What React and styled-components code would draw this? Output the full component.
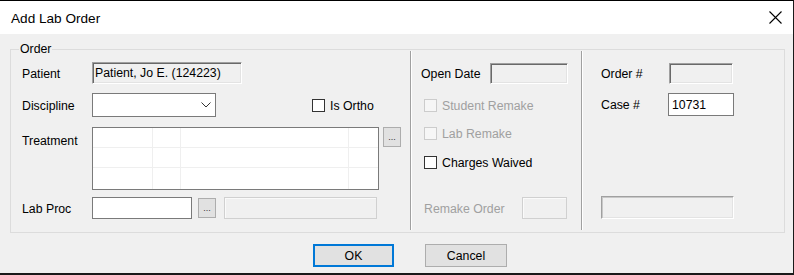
import React from "react";
import styled, { createGlobalStyle } from "styled-components";

const GlobalStyle = createGlobalStyle`
  body {
    margin: 0;
    font-family: "Liberation Sans", Arial, sans-serif;
    background: #ffffff;
  }
`

const Window = styled.div`
  width: 794px;
  height: 275px;
  box-sizing: border-box;
  border-top: 1px solid #000;
  border-right: 1px solid #1a1a1a;
  border-bottom: 2px solid #1a1a1a;
  display: flex;
  flex-direction: column;
  background: #f0f0f0;
`

const TitleBar = styled.div`
  height: 33px;
  flex: none;
  background: #fff;
  display: flex;
  align-items: center;
  justify-content: space-between;
  padding: 0 11px 0 11px;
`

const Title = styled.span`
  font-size: 13.6px;
  color: #000;
  padding-top: 1px;
`

const CloseIcon = styled.svg`
  width: 13px;
  height: 13px;
`

const Group = styled.div`
  position: relative;
  margin: 15px 8px 0 10px;
  height: 184px;
  box-sizing: border-box;
  border: 1px solid #dcdcdc;
`

const Legend = styled.span`
  position: absolute;
  top: -8px;
  left: 8px;
  padding: 0 1px;
  background: #f0f0f0;
  font-size: 12.3px;
  line-height: 14px;
`

const Columns = styled.div`
  display: grid;
  grid-template-columns: 399px 171px 1fr;
  margin-top: 1px;
  height: 179px;
`

const Column = styled.div`
  display: flex;
  flex-direction: column;
  box-sizing: border-box;
  padding-left: ${(p) => p.$pad}px;
  ${(p) => p.$divider && `
    border-left: 1px solid #a0a0a0;
    box-shadow: inset 1px 0 0 #ffffff;
  `}
`

const Row = styled.div`
  display: flex;
  align-items: ${(p) => (p.$top ? "flex-start" : "center")};
  margin-top: ${(p) => p.$mt}px;
  height: ${(p) => p.$h}px;
`

const Label = styled.span`
  font-size: 12.3px;
  line-height: 14px;
  padding-top: 1px;
  width: ${(p) => (p.$w ? `${p.$w}px` : "auto")};
  flex: none;
  color: ${(p) => (p.$disabled ? "#a0a0a0" : "#000")};
  margin-top: ${(p) => p.$mt || 0}px;
  margin-left: ${(p) => p.$ml || 0}px;
`

const TextBox = styled.div`
  box-sizing: border-box;
  width: ${(p) => p.$w}px;
  height: ${(p) => p.$h}px;
  margin-left: ${(p) => p.$ml || 0}px;
  background: #fff;
  border: 1px solid #7a7a7a;
  font-size: 12.3px;
  line-height: 14px;
  display: flex;
  align-items: center;
  padding: 1px 0 0 3px;
  flex: none;
`

const Sunken = styled.div`
  box-sizing: border-box;
  width: ${(p) => p.$w}px;
  height: ${(p) => p.$h}px;
  margin-left: ${(p) => p.$ml || 0}px;
  background: #f0f0f0;
  border: 1px solid;
  border-color: #a0a0a0 #ffffff #ffffff #a0a0a0;
  box-shadow: inset 1px 1px 0 #696969, inset -1px -1px 0 #e3e3e3;
  font-size: 12.3px;
  line-height: 14px;
  display: flex;
  align-items: center;
  padding-left: 2px;
  flex: none;
`

const FlatSunken = styled(Sunken)`
  border-color: #a0a0a0 #ffffff #ffffff #a0a0a0;
  box-shadow: inset 1px 1px 0 #c8c8c8, inset -1px -1px 0 #e3e3e3;
`

const DisabledBox = styled.div`
  box-sizing: border-box;
  width: ${(p) => p.$w}px;
  height: ${(p) => p.$h}px;
  margin-left: ${(p) => p.$ml || 0}px;
  background: #f0f0f0;
  border: 1px solid #d0d0d0;
  box-shadow: inset 1px 1px 0 #fafafa;
  flex: none;
`

const Combo = styled.div`
  box-sizing: border-box;
  width: 124px;
  height: 24px;
  background: #fff;
  border: 1px solid #7a7a7a;
  display: flex;
  align-items: center;
  justify-content: flex-end;
  padding-right: 4px;
  flex: none;
`

const Check = styled.span`
  box-sizing: border-box;
  width: 13px;
  height: 13px;
  flex: none;
  background: ${(p) => (p.$disabled ? "#f6f6f6" : "#fff")};
  border: 1px solid ${(p) => (p.$disabled ? "#cccccc" : "#333")};
  margin-right: 5px;
`

const CheckItem = styled.label`
  display: flex;
  align-items: center;
  margin-left: ${(p) => p.$ml || 0}px;
`

const DotsButton = styled.div`
  box-sizing: border-box;
  width: 18px;
  height: 20px;
  margin-left: ${(p) => p.$ml}px;
  background: #e1e1e1;
  border: 1px solid #adadad;
  font-size: 9px;
  line-height: 9px;
  color: #333;
  display: flex;
  align-items: flex-end;
  justify-content: center;
  padding-bottom: 4px;
  flex: none;
`

const Grid = styled.div`
  box-sizing: border-box;
  width: 287px;
  height: 63px;
  background: #fff;
  border: 1px solid #7a7a7a;
  display: grid;
  grid-template-columns: 60px 28px 168px 1fr;
  grid-template-rows: 20px 20px 1fr;
  flex: none;
`

const Cell = styled.div`
  border-right: ${(p) => (p.$last ? "none" : "1px solid #efefef")};
  border-bottom: ${(p) => (p.$bottom ? "none" : "1px solid #efefef")};
`

const ButtonRow = styled.div`
  display: flex;
  margin-top: 11px;
  padding-left: 313px;
  gap: 31px;
`

const Button = styled.div`
  box-sizing: border-box;
  width: ${(p) => p.$w}px;
  height: 23px;
  background: #e1e1e1;
  border: ${(p) => (p.$default ? "2px solid #0078d7" : "1px solid #adadad")};
  font-size: 12.3px;
  padding-top: 1px;
  display: flex;
  align-items: center;
  justify-content: center;
`

const TreatmentGrid = () => {
  const cells = [];
  for (let r = 0; r < 3; r++) {
    for (let c = 0; c < 4; c++) {
      cells.push(<Cell key={`${r}-${c}`} $last={c === 3} $bottom={r === 2} />);
    }
  }
  return <Grid>{cells}</Grid>;
}

const App = () => {
  return (
    <>
      <GlobalStyle />
      <Window>
        <TitleBar>
          <Title>Add Lab Order</Title>
          <CloseIcon viewBox="0 0 13 13">
            <path d="M0.5 0.5 L12.5 12.5 M12.5 0.5 L0.5 12.5" stroke="#000" strokeWidth="1.1" fill="none" />
          </CloseIcon>
        </TitleBar>

        <Group>
          <Legend>Order</Legend>
          <Columns>
            <Column $pad={11}>
              <Row $mt={11} $h={22}>
                <Label $w={70}>Patient</Label>
                <Sunken $w={150} $h={22}>Patient, Jo E. (124223)</Sunken>
              </Row>
              <Row $mt={9} $h={24}>
                <Label $w={70}>Discipline</Label>
                <Combo>
                  <svg width="10" height="6" viewBox="0 0 10 6">
                    <path d="M0.5 0.5 L5 5 L9.5 0.5" stroke="#333" strokeWidth="1" fill="none" />
                  </svg>
                </Combo>
                <CheckItem $ml={96}>
                  <Check />
                  <Label>Is Ortho</Label>
                </CheckItem>
              </Row>
              <Row $mt={10} $h={63} $top>
                <Label $w={70} $mt={6}>Treatment</Label>
                <TreatmentGrid />
                <DotsButton $ml={4}>...</DotsButton>
              </Row>
              <Row $mt={7} $h={22}>
                <Label $w={70}>Lab Proc</Label>
                <TextBox $w={100} $h={22} />
                <DotsButton $ml={6}>...</DotsButton>
                <DisabledBox $w={153} $h={22} $ml={8} />
              </Row>
            </Column>

            <Column $pad={10} $divider>
              <Row $mt={12} $h={21}>
                <Label $w={69}>Open Date</Label>
                <Sunken $w={78} $h={21} />
              </Row>
              <Row $mt={11} $h={20}>
                <CheckItem $ml={3}>
                  <Check $disabled />
                  <Label $disabled>Student Remake</Label>
                </CheckItem>
              </Row>
              <Row $mt={8} $h={20}>
                <CheckItem $ml={3}>
                  <Check $disabled />
                  <Label $disabled>Lab Remake</Label>
                </CheckItem>
              </Row>
              <Row $mt={9} $h={20}>
                <CheckItem $ml={3}>
                  <Check />
                  <Label>Charges Waived</Label>
                </CheckItem>
              </Row>
              <Row $mt={25} $h={22}>
                <Label $w={98} $ml={3} $disabled>Remake Order</Label>
                <DisabledBox $w={45} $h={22} />
              </Row>
            </Column>

            <Column $pad={19} $divider>
              <Row $mt={12} $h={21}>
                <Label $w={68}>Order #</Label>
                <Sunken $w={64} $h={21} />
              </Row>
              <Row $mt={9} $h={23}>
                <Label $w={67}>Case #</Label>
                <TextBox $w={66} $h={23}>10731</TextBox>
              </Row>
              <Row $mt={80} $h={23}>
                <FlatSunken $w={133} $h={23} />
              </Row>
            </Column>
          </Columns>
        </Group>

        <ButtonRow>
          <Button $w={81} $default>OK</Button>
          <Button $w={82}>Cancel</Button>
        </ButtonRow>
      </Window>
    </>
  );
}

export default App;
